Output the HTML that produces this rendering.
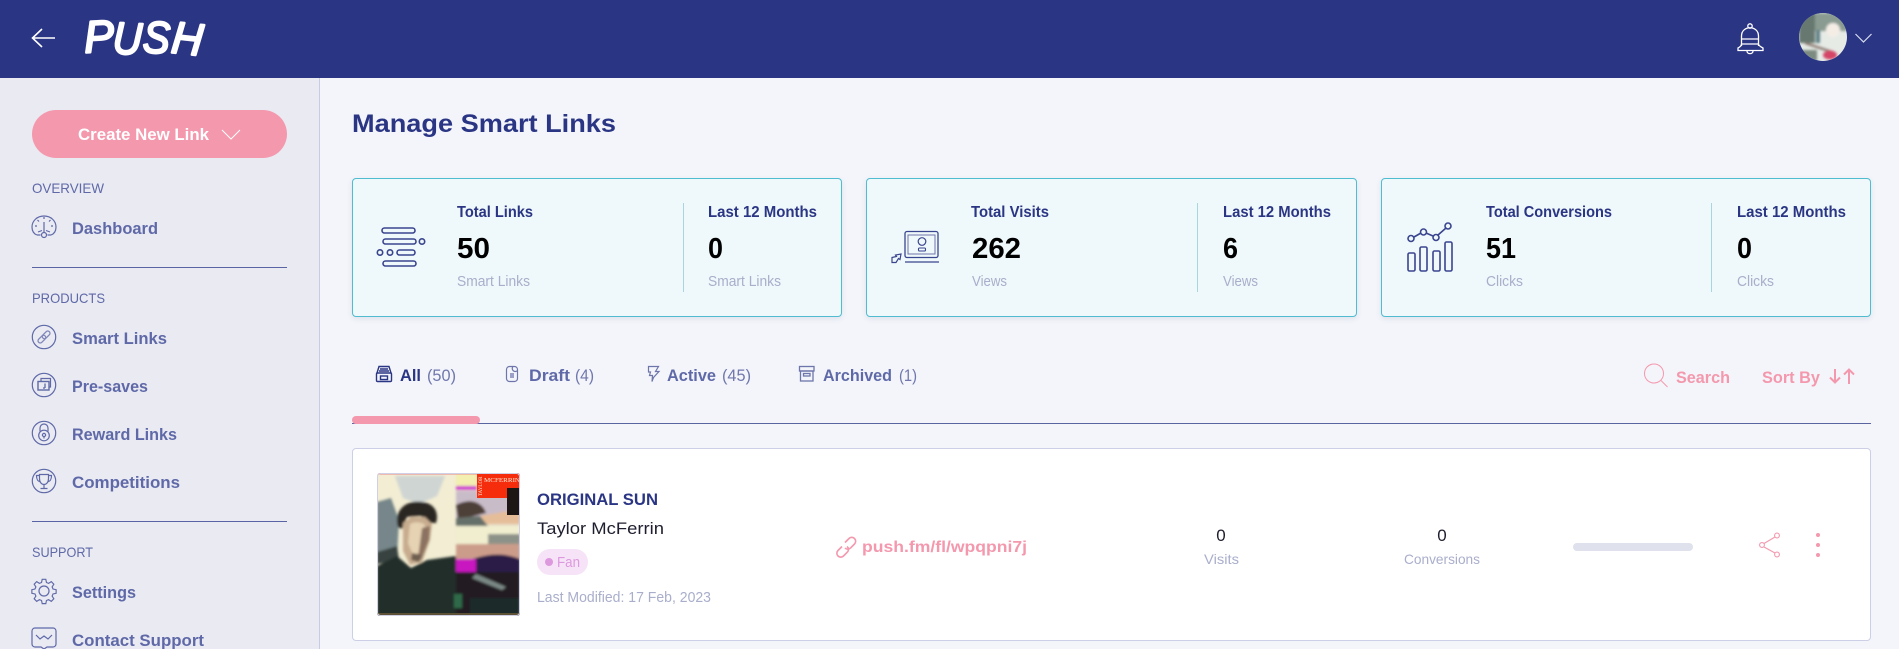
<!DOCTYPE html>
<html lang="en"><head><meta charset="utf-8"><title>Manage Smart Links</title>
<style>
html,body{margin:0;padding:0;width:1899px;height:649px;overflow:hidden;background:#f3f5fa}
body{position:relative;font-family:"Liberation Sans",sans-serif}
.b{position:absolute;box-sizing:border-box}
#hd{left:0;top:0;width:1899px;height:78px;background:#2a3584}
#sb{left:0;top:78px;width:320px;height:571px;background:#e9eaf2;border-right:1px solid #c9cbe0}
#btn{left:32px;top:110px;width:255px;height:48px;border-radius:24px;background:#f498ad}
.hr{height:1px;background:#5a64a5;left:32px;width:255px}
.c{top:178px;height:139px;background:#eff8fa;border:1px solid #4fbccf;border-radius:4px;box-shadow:0 2px 6px rgba(60,70,130,.10)}
.d{top:203px;width:1px;height:89px;background:#a9d5df}
#ln{left:352px;top:423px;width:1519px;height:1px;background:#5a64a0}
#bar{left:352px;top:416px;width:128px;height:8px;border-radius:4px;background:#f498ad}
#row{left:352px;top:448px;width:1519px;height:193px;background:#fff;border:1px solid #cdcfe6;border-radius:4px}
#bd{left:537px;top:549px;width:51px;height:26px;border-radius:13px;background:#f6e3f7}
#pg{left:1573px;top:543px;width:120px;height:8px;border-radius:4px;background:#dfe1ec}
svg{position:absolute;left:0;top:0}
text{font-family:"Liberation Sans",sans-serif}
.n{font-size:17px;font-weight:700;fill:#5f69a8}
.s{font-size:14px;fill:#5f69a8}
.t{font-size:15.5px;font-weight:700;fill:#2a3584}
.v{font-size:29px;font-weight:700;fill:#000}
.u{font-size:15px;fill:#a9aecb}
.tb{font-size:17px;font-weight:700;fill:#5f69a8}
.ct{font-size:17px;fill:#7077ad}
.p{font-size:17px;font-weight:700;fill:#f498ad}
.i{fill:none;stroke:#5f69a8;stroke-width:1.2}
.j{fill:none;stroke:#3a458f;stroke-width:1.6}
</style></head><body>
<div class="b" id="hd"></div>
<div class="b" id="sb"></div>
<div class="b" id="btn"></div>
<div class="b hr" style="top:267px"></div>
<div class="b hr" style="top:521px"></div>
<div class="b c" style="left:352px;width:490px"></div>
<div class="b c" style="left:866px;width:491px"></div>
<div class="b c" style="left:1381px;width:490px"></div>
<div class="b d" style="left:683px"></div>
<div class="b d" style="left:1197px"></div>
<div class="b d" style="left:1711px"></div>
<div class="b" id="ln"></div><div class="b" id="bar"></div>
<div class="b" id="row"></div><div class="b" id="bd"></div><div class="b" id="pg"></div>
<svg width="1899" height="649" viewBox="0 0 1899 649" xmlns="http://www.w3.org/2000/svg">
<defs>
<clipPath id="av"><circle cx="1823" cy="37" r="24"/></clipPath>
<clipPath id="al"><rect x="377" y="473" width="143" height="143" rx="3"/></clipPath>
<filter id="bl" x="-20%" y="-20%" width="140%" height="140%"><feGaussianBlur stdDeviation="1.3"/></filter>
<filter id="bl2" x="-20%" y="-20%" width="140%" height="140%"><feGaussianBlur stdDeviation="1.200"/></filter>
</defs>
<!-- header -->
<path d="M55 38H33M42 29l-9.500 9 9.500 9" fill="none" stroke="#fff" stroke-width="1.600"/>
<g fill="#fff" font-size="45" font-style="italic" font-weight="400" stroke="#fff" stroke-width="2.200" stroke-linejoin="round">
<text x="84" y="52" transform="rotate(-3 98 38)" textLength="30" lengthAdjust="spacingAndGlyphs">P</text>
<text x="113" y="54" transform="rotate(3 128 38)" textLength="29" lengthAdjust="spacingAndGlyphs">U</text>
<text x="143" y="53" transform="rotate(3 158 38)" textLength="27" lengthAdjust="spacingAndGlyphs">S</text>
<text x="172" y="54" transform="rotate(6 185 38)" textLength="31" lengthAdjust="spacingAndGlyphs">H</text>
</g>
<g fill="none" stroke="#fff" stroke-width="1.300">
<circle cx="1750" cy="26" r="2.200"/>
<path d="M1741.500 46V36c0-11 17-11 17 0v10M1741.500 39h17M1741.500 44h17"/>
<path d="M1741.500 44c0 1.500-1.500 3-3.500 4v2.500h25V48c-2-1-4.500-2.500-4.500-4"/>
<path d="M1747 51c0 3.500 6 3.500 6 0"/>
</g>
<g clip-path="url(#av)"><rect x="1799" y="13" width="48" height="48" fill="#e6ebe6"/>
<g filter="url(#bl2)">
<rect x="1799" y="13" width="48" height="18" fill="#8a9c92"/>
<rect x="1799" y="13" width="16" height="30" fill="#66786f"/>
<rect x="1816" y="30" width="4" height="13" fill="#5f7f85"/>
<circle cx="1833" cy="30" r="7" fill="#f4ede6"/>
<path d="M1805 43l27 9" stroke="#8b7a72" stroke-width="2.500"/>
<ellipse cx="1830" cy="55" rx="7" ry="4.500" fill="#d44566"/>
<rect x="1799" y="50" width="18" height="11" fill="#7c8b80"/>
</g></g>
<path d="M1855.500 34l8 8 8-8" fill="none" stroke="#d9dcee" stroke-width="1.200"/>
<!-- sidebar -->
<text x="78" y="140" font-size="17" font-weight="700" fill="#fff" textLength="131" lengthAdjust="spacingAndGlyphs">Create New Link</text>
<path d="M222 130l9 9 9-9" fill="none" stroke="#fff" stroke-width="1"/>
<text class="s" x="32" y="193" textLength="72" lengthAdjust="spacingAndGlyphs">OVERVIEW</text>
<text class="n" x="72" y="234" textLength="86" lengthAdjust="spacingAndGlyphs">Dashboard</text>
<text class="s" x="32" y="303" textLength="73" lengthAdjust="spacingAndGlyphs">PRODUCTS</text>
<text class="n" x="72" y="344" textLength="95" lengthAdjust="spacingAndGlyphs">Smart Links</text>
<text class="n" x="72" y="392" textLength="76" lengthAdjust="spacingAndGlyphs">Pre-saves</text>
<text class="n" x="72" y="440" textLength="105" lengthAdjust="spacingAndGlyphs">Reward Links</text>
<text class="n" x="72" y="488" textLength="108" lengthAdjust="spacingAndGlyphs">Competitions</text>
<text class="s" x="32" y="557" textLength="61" lengthAdjust="spacingAndGlyphs">SUPPORT</text>
<text class="n" x="72" y="598" textLength="64" lengthAdjust="spacingAndGlyphs">Settings</text>
<text class="n" x="72" y="646" textLength="132" lengthAdjust="spacingAndGlyphs">Contact Support</text>
<!-- sidebar icons -->
<g class="i">
<path d="M37 235c-4-1.500-5-5-5-8 0-6 5-11 12-11s12 5 12 11c0 3-1 6.500-5 8h-3.500M40.500 235H37"/>
<circle cx="44" cy="235" r="2.500"/><path d="M44 232v-10M35 226h2M51 226h2M37.500 220l1.500 1.500M50.500 220l-1.500 1.500M44 217v2M38 232l4-1.500M50 232l-4-1.500"/>
<circle cx="44" cy="337" r="11.700"/>
<g stroke="#7f87ba" stroke-width="1.300" transform="rotate(-45 44 337)"><rect x="36.500" y="334.800" width="9" height="4.400" rx="2.200"/><rect x="42.500" y="334.800" width="9" height="4.400" rx="2.200"/></g>
<circle cx="44" cy="385" r="11.700"/><rect x="38" y="381.500" width="11" height="8.500" stroke-width="1.400"/><path d="M41 381v-2.500h9.500v8.500h-1.500"/><path d="M45 383.500v4.500M43 388h2" stroke-width="1.300"/>
<circle cx="44" cy="433" r="11.700"/><circle cx="44" cy="435.500" r="5.300"/><path d="M40 431.500v-3.500a4 4 0 0 1 8 0v3.500"/><circle cx="44" cy="435" r="1.600"/><path d="M44 436.500v2"/>
<circle cx="44" cy="481" r="11.700"/><path d="M39.500 474.500h9v4c0 8-9 8-9 0zM39.500 475.500h-3c0 5 2 6 4 6.500M48.500 475.500h3c0 5-2 6-4 6.500M44 484v4M40.500 488.500h7"/>
<circle cx="44" cy="591" r="5"/>
<g transform="translate(44 591) scale(.82) translate(-44 -591)"><path d="M41.800 576.800h4.400l.8 3.800 2.600 1.100 3.300-2.100 3.100 3.100-2.100 3.300 1.100 2.600 3.800.8v4.400l-3.800.8-1.100 2.600 2.100 3.300-3.100 3.100-3.300-2.100-2.600 1.100-.8 3.800h-4.400l-.8-3.800-2.600-1.100-3.300 2.100-3.100-3.100 2.100-3.300-1.100-2.600-3.800-.8v-4.400l3.800-.8 1.100-2.600-2.100-3.300 3.100-3.100 3.300 2.100 2.600-1.100z" stroke-width="1.400"/></g>
<path d="M35 628h18a3 3 0 0 1 3 3v13a3 3 0 0 1-3 3h-6l-3 2-3-2h-6a3 3 0 0 1-3-3v-13a3 3 0 0 1 3-3z"/><path d="M36 635l4 4 4-3 4 3 4-4"/>
</g>
<!-- main -->
<text x="352" y="132" font-size="25" font-weight="700" fill="#2a3584" textLength="264" lengthAdjust="spacingAndGlyphs">Manage Smart Links</text>
<!-- stats -->
<text class="t" x="457" y="217" textLength="76" lengthAdjust="spacingAndGlyphs">Total Links</text>
<text class="t" x="708" y="217" textLength="109" lengthAdjust="spacingAndGlyphs">Last 12 Months</text>
<text class="v" x="457" y="258" textLength="33" lengthAdjust="spacingAndGlyphs">50</text>
<text class="v" x="708" y="258" textLength="15" lengthAdjust="spacingAndGlyphs">0</text>
<text class="u" x="457" y="286" textLength="73" lengthAdjust="spacingAndGlyphs">Smart Links</text>
<text class="u" x="708" y="286" textLength="73" lengthAdjust="spacingAndGlyphs">Smart Links</text>
<text class="t" x="971" y="217" textLength="78" lengthAdjust="spacingAndGlyphs">Total Visits</text>
<text class="t" x="1223" y="217" textLength="108" lengthAdjust="spacingAndGlyphs">Last 12 Months</text>
<text class="v" x="972" y="258" textLength="49" lengthAdjust="spacingAndGlyphs">262</text>
<text class="v" x="1223" y="258" textLength="15" lengthAdjust="spacingAndGlyphs">6</text>
<text class="u" x="972" y="286" textLength="35" lengthAdjust="spacingAndGlyphs">Views</text>
<text class="u" x="1223" y="286" textLength="35" lengthAdjust="spacingAndGlyphs">Views</text>
<text class="t" x="1486" y="217" textLength="126" lengthAdjust="spacingAndGlyphs">Total Conversions</text>
<text class="t" x="1737" y="217" textLength="109" lengthAdjust="spacingAndGlyphs">Last 12 Months</text>
<text class="v" x="1486" y="258" textLength="30" lengthAdjust="spacingAndGlyphs">51</text>
<text class="v" x="1737" y="258" textLength="15" lengthAdjust="spacingAndGlyphs">0</text>
<text class="u" x="1486" y="286" textLength="37" lengthAdjust="spacingAndGlyphs">Clicks</text>
<text class="u" x="1737" y="286" textLength="37" lengthAdjust="spacingAndGlyphs">Clicks</text>
<!-- stat icons -->
<g class="j">
<rect x="382" y="228" width="33" height="5" rx="2.500"/><rect x="383" y="239" width="33" height="5" rx="2.500"/><circle cx="422" cy="241.500" r="2.700"/>
<circle cx="380" cy="252.500" r="2.700"/><circle cx="390" cy="252.500" r="2.700"/><rect x="397" y="250" width="18" height="5" rx="2.500"/><rect x="383" y="261" width="33" height="5" rx="2.500"/>
<rect x="905" y="231.500" width="33" height="26" rx="2" stroke-width="1.300"/><rect x="908" y="235" width="27" height="19" stroke-width="1" stroke="#6d75ab"/>
<circle cx="922" cy="241.500" r="3.800" stroke-width="1.200"/><rect x="918.500" y="248" width="7" height="3" rx="1" stroke-width="1.100"/><path d="M905 262h34" stroke-width="1.300"/>
<path d="M892 257.500l4.500-1-1-1.500 5.500-1-1 5.500-1.500-1-2.500 4h-4z" stroke-width="1.200"/>
<circle cx="1411" cy="238.500" r="3"/><circle cx="1423.500" cy="232" r="3"/><circle cx="1436" cy="237.500" r="3"/><circle cx="1448" cy="226" r="3"/>
<path d="M1414 237l7-4M1426 233l7 3M1438 235l8-7"/>
<rect x="1408" y="253" width="7" height="18" rx="1.500"/><rect x="1420" y="247" width="7" height="24" rx="1.500"/><rect x="1433" y="251" width="7" height="20" rx="1.500"/><rect x="1445" y="242" width="7" height="29" rx="1.500"/>
</g>
<!-- tabs -->
<text x="400" y="381" class="tb" style="fill:#2a3584" textLength="21" lengthAdjust="spacingAndGlyphs">All</text><text class="ct" x="427" y="381" textLength="29" lengthAdjust="spacingAndGlyphs">(50)</text>
<text class="tb" x="529" y="381" textLength="41" lengthAdjust="spacingAndGlyphs">Draft</text><text class="ct" x="575" y="381" textLength="19" lengthAdjust="spacingAndGlyphs">(4)</text>
<text class="tb" x="667" y="381" textLength="49" lengthAdjust="spacingAndGlyphs">Active</text><text class="ct" x="722" y="381" textLength="29" lengthAdjust="spacingAndGlyphs">(45)</text>
<text class="tb" x="823" y="381" textLength="69" lengthAdjust="spacingAndGlyphs">Archived</text><text class="ct" x="899" y="381" textLength="18" lengthAdjust="spacingAndGlyphs">(1)</text>
<g fill="none" stroke="#2a3584" stroke-width="1.400"><rect x="376.500" y="373" width="15" height="8.500" rx="1"/><rect x="380.500" y="376" width="7" height="3.500"/><path d="M377 373l2-6.500h10l2 6.500M380 369h8M379 371h10"/></g>
<g fill="none" stroke="#6d75ab" stroke-width="1.200"><rect x="506.500" y="366.500" width="11" height="15" rx="3"/><path d="M513 366.500a3 3 0 0 0 4.500 4"/><path d="M510 373h4v5h-4z" fill="#9aa0c8" stroke="none"/></g>
<path d="M648.500 366.500h10l-3 5h3.500l-5.500 6-1.500 4 .5-6h-3l1-3.500h-2z" fill="none" stroke="#6d75ab" stroke-width="1.200"/>
<g fill="none" stroke="#6d75ab" stroke-width="1.300"><rect x="799.500" y="366.500" width="14.500" height="4.500"/><rect x="800.500" y="371" width="12.500" height="10"/><rect x="803.500" y="373.500" width="6.500" height="2.500"/></g>
<!-- search -->
<g fill="none" stroke="#f498ad" stroke-width="1"><circle cx="1654" cy="373.500" r="9.500"/><path d="M1661 380.500l6.500 6.500"/></g>
<text class="p" x="1676" y="383" textLength="54" lengthAdjust="spacingAndGlyphs">Search</text>
<text class="p" x="1762" y="383" textLength="58" lengthAdjust="spacingAndGlyphs">Sort By</text>
<path d="M1835 369v13M1830 377.500l5 5 5-5M1849 384v-14M1844 374.500l5-5 5 5" fill="none" stroke="#f498ad" stroke-width="2"/>
<!-- album -->
<g clip-path="url(#al)">
<rect x="377" y="473" width="143" height="143" fill="#f2edd3"/>
<g filter="url(#bl)">
<path d="M395 476h50l-8 20-18 8-16-6z" fill="#cfd5d3"/>
<path d="M377 502l14-4 8 22-2 38-20 4z" fill="#76868a"/>
<path d="M377 552l20-6 2 14-22 4z" fill="#38423f"/>
<path d="M398 527c-5-18 10-28 25-25 12 2 16 11 13 21l-7 0-8-7-14 1-5 12z" fill="#2b2622"/>
<path d="M403 523l8-6 14 0 7 7-2 16-8 22-12 3-7-14z" fill="#c7ac8e"/>
<path d="M410 524c6-3 11-2 15 1l-1 12-5 16-6 2-5-12z" fill="#e6d3b3"/>
<path d="M422 528l8-2-1 14-8 20-3-2z" fill="#8c7260"/>
<path d="M412 553l10 2-3 7-8-2z" fill="#6e5e50"/>
<path d="M377 566l20-10 14 12 16-8 29-4v60h-79z" fill="#232d2b"/>
<rect x="456" y="473" width="64" height="143" fill="#e8dfc8"/>
<rect x="456" y="473" width="21" height="13" fill="#f2efb0"/>
<rect x="456" y="486" width="21" height="4" fill="#d02bd0"/>
<path d="M456 491h64v32h-64z" fill="#c9bcc9"/>
<path d="M456 505c15-8 27-2 30 8l-28 7z" fill="#4d3f38"/>
<path d="M480 516l40-7v15h-34z" fill="#e5bd98"/>
<path d="M456 518l24-2 8 10h-32z" fill="#66706a"/>
<rect x="456" y="526" width="64" height="18" fill="#f1eecf"/>
<rect x="488" y="534" width="32" height="10" fill="#8d9288"/>
<rect x="456" y="544" width="64" height="16" fill="#cc9c8a"/>
<path d="M472 559c20-6 32-6 48 0v13h-48z" fill="#2b1a47"/>
<rect x="456" y="559" width="20" height="13" fill="#c813c0"/>
<rect x="456" y="572" width="64" height="44" fill="#221b20"/>
<path d="M476 574l30 13-4 3-30-12z" fill="#7c8a86"/>
<rect x="454" y="594" width="8" height="14" fill="#2f6a4a"/>
<rect x="470" y="598" width="50" height="18" fill="#1c2a2a"/>
</g>
<rect x="377" y="473" width="143" height="1.500" fill="#e88"/>
<rect x="377" y="613" width="143" height="3" fill="#5e5236"/>
<rect x="477" y="473" width="43" height="25" fill="#f52d0d"/>
<rect x="507" y="488" width="13" height="27" fill="#1c1714"/>
<text x="484" y="482" font-size="6.500" fill="#ffe9d8" textLength="36" lengthAdjust="spacingAndGlyphs" style="font-family:'Liberation Serif',serif">MCFERRIN</text>
<text transform="translate(482 496) rotate(-90)" font-size="5" fill="#ffe9d8" style="font-family:'Liberation Serif',serif">TAYLOR</text>
</g>
<rect x="377.500" y="473.500" width="142" height="142" rx="3" fill="none" stroke="#cfcfe6"/>
<!-- row text -->
<text x="537" y="505" font-size="17" font-weight="700" fill="#2a3584" textLength="121" lengthAdjust="spacingAndGlyphs">ORIGINAL SUN</text>
<text x="537" y="534" font-size="17" fill="#1e1e2e" textLength="127" lengthAdjust="spacingAndGlyphs">Taylor McFerrin</text>
<circle cx="549" cy="562" r="4" fill="#dd99dd"/>
<text x="557" y="567" font-size="15" fill="#dd99dd" textLength="23" lengthAdjust="spacingAndGlyphs">Fan</text>
<text class="u" x="537" y="602" textLength="174" lengthAdjust="spacingAndGlyphs">Last Modified: 17 Feb, 2023</text>
<g fill="none" stroke="#f498ad" stroke-width="1.600" transform="translate(0 -2.500)"><path d="M842 549l-4 4a3.800 3.800 0 0 0 5.500 5.500l4-4a3.800 3.800 0 0 0-.5-5.500"/><path d="M846 545l4-4a3.800 3.800 0 0 1 5.500 5.500l-4 4a3.800 3.800 0 0 1-5.500 0" transform="translate(-1 0)"/></g>
<text x="862" y="552" font-size="16" font-weight="700" fill="#f498ad" textLength="165" lengthAdjust="spacingAndGlyphs">push.fm/fl/wpqpni7j</text>
<text x="1221" y="541" font-size="17" fill="#1e1e2e" text-anchor="middle">0</text>
<text class="u" x="1204" y="564" style="font-size:14px" textLength="35" lengthAdjust="spacingAndGlyphs">Visits</text>
<text x="1442" y="541" font-size="17" fill="#1e1e2e" text-anchor="middle">0</text>
<text class="u" x="1404" y="564" style="font-size:14px" textLength="76" lengthAdjust="spacingAndGlyphs">Conversions</text>
<g fill="none" stroke="#f498ad" stroke-width="1.100"><circle cx="1777" cy="535.500" r="2.400"/><circle cx="1762" cy="545" r="2.400"/><circle cx="1777" cy="554.500" r="2.400"/><path d="M1775 537l-11 6.500M1764 547l11 6"/></g>
<g fill="#f498ad"><circle cx="1818" cy="535" r="2"/><circle cx="1818" cy="545" r="2"/><circle cx="1818" cy="555" r="2"/></g>
</svg>
</body></html>
